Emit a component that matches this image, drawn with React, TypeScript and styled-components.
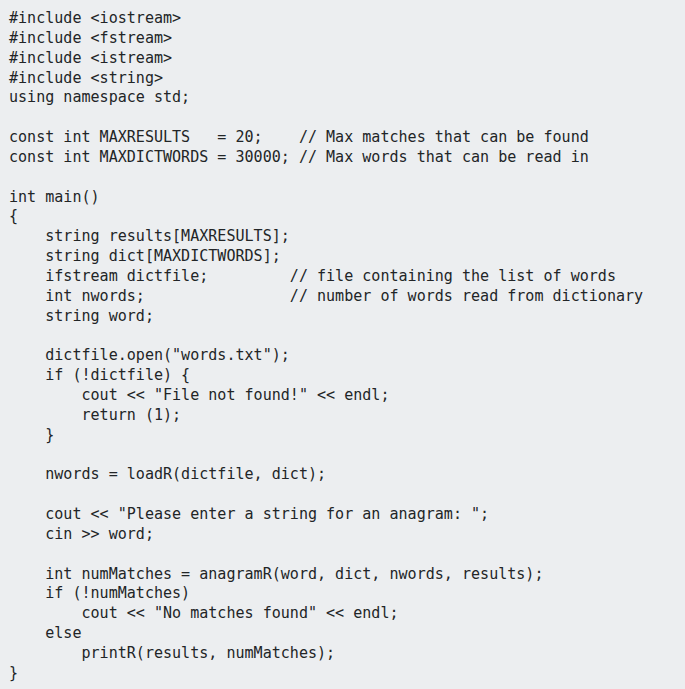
import React from "react";
import styled, { createGlobalStyle } from "styled-components";

const Global = createGlobalStyle`
  html, body { margin: 0; padding: 0; background: #eceef0; }
`;

const CodeBlock = styled.pre`
  margin: 0;
  padding: 9px 9px 0;
  min-height: 689px;
  box-sizing: border-box;
  background: #eceef0;
  color: #222527;
  font-family: "DejaVu Sans Mono", "Liberation Mono", monospace;
  font-size: 15.05px;
  line-height: 19.85px;
  white-space: pre;
  overflow: hidden;
`;

const code = `#include <iostream>
#include <fstream>
#include <istream>
#include <string>
using namespace std;

const int MAXRESULTS   = 20;    // Max matches that can be found
const int MAXDICTWORDS = 30000; // Max words that can be read in

int main()
{
    string results[MAXRESULTS];
    string dict[MAXDICTWORDS];
    ifstream dictfile;         // file containing the list of words
    int nwords;                // number of words read from dictionary
    string word;

    dictfile.open("words.txt");
    if (!dictfile) {
        cout << "File not found!" << endl;
        return (1);
    }

    nwords = loadR(dictfile, dict);

    cout << "Please enter a string for an anagram: ";
    cin >> word;

    int numMatches = anagramR(word, dict, nwords, results);
    if (!numMatches)
        cout << "No matches found" << endl;
    else
        printR(results, numMatches);
}`;

export default function App() {
  return (
    <>
      <Global />
      <CodeBlock>{code}</CodeBlock>
    </>
  );
}
